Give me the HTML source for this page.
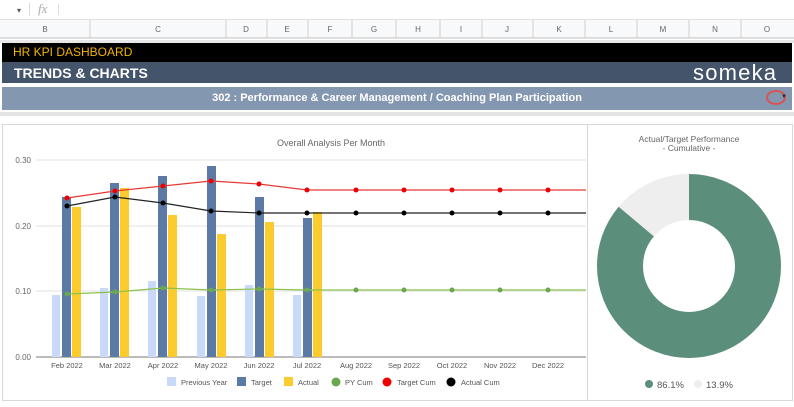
<!DOCTYPE html>
<html><head><style>
body{margin:0;width:794px;height:407px;overflow:hidden;background:#fff;font-family:"Liberation Sans",sans-serif;position:relative}
.a{position:absolute}
</style></head><body>
<div class="a" style="left:0;top:0;width:794px;height:19px;border-bottom:1px solid #e0e0e0;background:#fff"></div>
<div class="a" style="left:17px;top:6px;font-size:8px;color:#555">▾</div>
<div class="a" style="left:29px;top:3px;width:1px;height:13px;background:#ddd"></div>
<div class="a" style="left:38px;top:1px;font-size:13px;color:#aaa;font-style:italic;font-family:'Liberation Serif',serif">fx</div>
<div class="a" style="left:58px;top:4px;width:1px;height:11px;background:#ddd"></div>
<svg class="a" style="left:0;top:20px" width="794" height="20">
<rect x="0" y="0" width="794" height="18" fill="#f8f9fa"/>
<line x1="0" y1="18" x2="794" y2="18" stroke="#c0c0c0"/>
<g stroke="#d0d0d0"><line x1="90" y1="0" x2="90" y2="18"/><line x1="226" y1="0" x2="226" y2="18"/><line x1="267" y1="0" x2="267" y2="18"/><line x1="308" y1="0" x2="308" y2="18"/><line x1="352" y1="0" x2="352" y2="18"/><line x1="396" y1="0" x2="396" y2="18"/><line x1="440" y1="0" x2="440" y2="18"/><line x1="482" y1="0" x2="482" y2="18"/><line x1="533" y1="0" x2="533" y2="18"/><line x1="585" y1="0" x2="585" y2="18"/><line x1="637" y1="0" x2="637" y2="18"/><line x1="689" y1="0" x2="689" y2="18"/><line x1="741" y1="0" x2="741" y2="18"/></g>
<g font-size="8" fill="#666" text-anchor="middle"><text x="45" y="12">B</text><text x="158" y="12">C</text><text x="246" y="12">D</text><text x="287" y="12">E</text><text x="330" y="12">F</text><text x="374" y="12">G</text><text x="418" y="12">H</text><text x="461" y="12">I</text><text x="507" y="12">J</text><text x="559" y="12">K</text><text x="611" y="12">L</text><text x="663" y="12">M</text><text x="715" y="12">N</text><text x="767" y="12">O</text></g>
</svg>
<div class="a" style="left:0;top:40px;width:794px;height:3px;background:#e8e8e8"></div>
<div class="a" style="left:2px;top:43px;width:790px;height:19px;background:#000;color:#f4b400;font-size:12px;line-height:19px;padding-left:11px;box-sizing:border-box">HR KPI DASHBOARD</div>
<div class="a" style="left:2px;top:62px;width:790px;height:21px;background:#44546a;color:#fff;font-size:14px;font-weight:bold;line-height:22px;padding-left:12px;box-sizing:border-box">TRENDS &amp; CHARTS</div>
<div class="a" style="left:693px;top:60px;color:#fff;font-size:22px;letter-spacing:1.2px;line-height:25px">someka</div>
<div class="a" style="left:2px;top:87px;width:790px;height:23px;background:#8497b0;color:#fff;font-size:11px;font-weight:bold;line-height:23px;text-align:center">302 : Performance &amp; Career Management / Coaching Plan Participation</div>
<div class="a" style="left:766px;top:90px;width:20px;height:15px;border:2px solid #d9534f;border-radius:50%;box-sizing:border-box"></div>
<div class="a" style="left:781px;top:94px;font-size:6px;color:#223">▼</div>
<div class="a" style="left:0;top:112px;width:794px;height:4px;background:#e4e4e4"></div>
<svg class="a" style="left:0;top:120px" width="794" height="287">
<rect x="2.5" y="4.5" width="585" height="276" fill="#fff" stroke="#d8d8d8"/>
<rect x="587.5" y="4.5" width="205" height="276" fill="#fff" stroke="#d8d8d8"/>
</svg>
<svg class="a" style="left:0;top:0" width="794" height="407" font-family="Liberation Sans,sans-serif">
<text x="331" y="146" font-size="9" fill="#666" text-anchor="middle">Overall Analysis Per Month</text>
<g stroke="#e0e0e0"><line x1="36" y1="160" x2="586" y2="160"/><line x1="36" y1="226" x2="586" y2="226"/><line x1="36" y1="291" x2="586" y2="291"/></g>
<line x1="36" y1="357" x2="586" y2="357" stroke="#777"/>
<g font-size="8" fill="#666" text-anchor="end"><text x="31" y="163">0.30</text><text x="31" y="229">0.20</text><text x="31" y="294">0.10</text><text x="31" y="360">0.00</text></g>
<g fill="#c9daf8"><rect x="52" y="295" width="8" height="62"/><rect x="100" y="288" width="8" height="69"/><rect x="148" y="281" width="8" height="76"/><rect x="197" y="296" width="8" height="61"/><rect x="245" y="285" width="8" height="72"/><rect x="293" y="295" width="8" height="62"/></g>
<g fill="#5b7ba6"><rect x="62" y="197" width="9" height="160"/><rect x="110" y="183" width="9" height="174"/><rect x="158" y="176" width="9" height="181"/><rect x="207" y="166" width="9" height="191"/><rect x="255" y="197" width="9" height="160"/><rect x="303" y="218" width="9" height="139"/></g>
<g fill="#fccb2e"><rect x="72" y="207" width="9" height="150"/><rect x="120" y="188" width="9" height="169"/><rect x="168" y="215" width="9" height="142"/><rect x="217" y="234" width="9" height="123"/><rect x="265" y="222" width="9" height="135"/><rect x="313" y="212" width="9" height="145"/></g>
<polyline fill="none" stroke="#e53935" stroke-width="1.2" points="67,198 115,191 163,186 211,181 259,184 307,190 586,190"/>
<polyline fill="none" stroke="#222" stroke-width="1.2" points="67,206 115,197 163,203 211,211 259,213 307,213 586,213"/>
<polyline fill="none" stroke="#8bc34a" stroke-width="1.2" points="67,294 115,292 163,288 211,290 259,289 307,290 586,290"/>
<g fill="#e00"><circle cx="67" cy="198" r="2.5"/><circle cx="115" cy="191" r="2.5"/><circle cx="163" cy="186" r="2.5"/><circle cx="211" cy="181" r="2.5"/><circle cx="259" cy="184" r="2.5"/><circle cx="307" cy="190" r="2.5"/><circle cx="356" cy="190" r="2.5"/><circle cx="404" cy="190" r="2.5"/><circle cx="452" cy="190" r="2.5"/><circle cx="500" cy="190" r="2.5"/><circle cx="548" cy="190" r="2.5"/></g>
<g fill="#000"><circle cx="67" cy="206" r="2.5"/><circle cx="115" cy="197" r="2.5"/><circle cx="163" cy="203" r="2.5"/><circle cx="211" cy="211" r="2.5"/><circle cx="259" cy="213" r="2.5"/><circle cx="307" cy="213" r="2.5"/><circle cx="356" cy="213" r="2.5"/><circle cx="404" cy="213" r="2.5"/><circle cx="452" cy="213" r="2.5"/><circle cx="500" cy="213" r="2.5"/><circle cx="548" cy="213" r="2.5"/></g>
<g fill="#6aa84f"><circle cx="67" cy="294" r="2.5"/><circle cx="115" cy="292" r="2.5"/><circle cx="163" cy="288" r="2.5"/><circle cx="211" cy="290" r="2.5"/><circle cx="259" cy="289" r="2.5"/><circle cx="307" cy="290" r="2.5"/><circle cx="356" cy="290" r="2.5"/><circle cx="404" cy="290" r="2.5"/><circle cx="452" cy="290" r="2.5"/><circle cx="500" cy="290" r="2.5"/><circle cx="548" cy="290" r="2.5"/></g>
<g font-size="7.5" fill="#555" text-anchor="middle"><text x="67" y="368">Feb 2022</text><text x="115" y="368">Mar 2022</text><text x="163" y="368">Apr 2022</text><text x="211" y="368">May 2022</text><text x="259" y="368">Jun 2022</text><text x="307" y="368">Jul 2022</text><text x="356" y="368">Aug 2022</text><text x="404" y="368">Sep 2022</text><text x="452" y="368">Oct 2022</text><text x="500" y="368">Nov 2022</text><text x="548" y="368">Dec 2022</text></g>
<g font-size="7.5" fill="#555">
<rect x="167" y="377" width="9" height="9" fill="#c9daf8"/><text x="181" y="385">Previous Year</text>
<rect x="237" y="377" width="9" height="9" fill="#5b7ba6"/><text x="251" y="385">Target</text>
<rect x="284" y="377" width="9" height="9" fill="#fccb2e"/><text x="298" y="385">Actual</text>
<circle cx="336" cy="382" r="4.5" fill="#6aa84f"/><text x="345" y="385">PY Cum</text>
<circle cx="387" cy="382" r="4.5" fill="#e00"/><text x="397" y="385">Target Cum</text>
<circle cx="451" cy="382" r="4.5" fill="#000"/><text x="461" y="385">Actual Cum</text>
</g>
<g font-size="8.5" fill="#666" text-anchor="middle"><text x="689" y="142">Actual/Target Performance</text><text x="689" y="151">- Cumulative -</text></g>
<circle cx="689" cy="266" r="69" fill="none" stroke="#eeeeee" stroke-width="46"/>
<circle cx="689" cy="266" r="69" fill="none" stroke="#5b8f7b" stroke-width="46" stroke-dasharray="373.3 500" transform="rotate(-90 689 266)"/>
<circle cx="649" cy="384" r="4" fill="#5b8f7b"/><text x="657" y="388" font-size="9.5" fill="#555">86.1%</text>
<circle cx="698" cy="384" r="4" fill="#eee"/><text x="706" y="388" font-size="9.5" fill="#555">13.9%</text>
</svg>
</body></html>
